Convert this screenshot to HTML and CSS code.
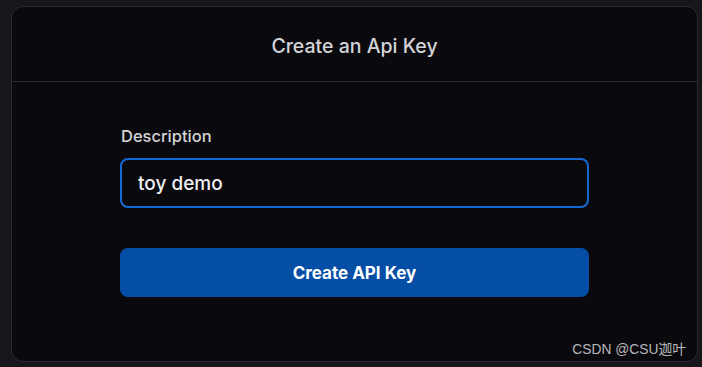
FILE: index.html
```html
<!DOCTYPE html>
<html lang="en">
<head>
    <meta charset="UTF-8">
    <meta name="viewport" content="width=device-width, initial-scale=1.0">
    <title>Create an Api Key</title>
    <link rel="stylesheet" href="styles.css">
</head>
<body>

<div class="modal">
    <div class="modal-header">
        <h2>Create an Api Key</h2>
    </div>

    <div class="modal-body">
        <label class="field-label" for="description">Description</label>
        <input type="text" id="description" class="field-input" value="toy demo">

        <button class="button">Create API Key</button>
    </div>

    <!-- marca d'água -->
    <div class="watermark">CSDN @CSU迦叶</div>
</div>

</body>
</html>
```

FILE: styles.css
```css
body {
    margin: 0;
    background-color: #17171b;
    font-family: Inter, "Noto Sans", Arial, sans-serif;
    color: #d4d4d8;
}
.modal {
    position: relative;
    box-sizing: border-box;
    margin: 6px 0 0 11px;
    width: 687px;
    height: 356px;
    background-color: #0a0a0e;
    border: 1px solid #2a2a30;
    border-radius: 12px;
}
.modal-header {
    box-sizing: border-box;
    height: 75px;
    padding-top: 3px;
    display: flex;
    align-items: center;
    justify-content: center;
    border-bottom: 1px solid #2a2a30;
}
.modal-header h2 {
    margin: 0;
    font-size: 19.5px;
    font-weight: 500;
    color: #d4d4d8;
}
.modal-body {
    padding: 44px 0 0 108px;
    width: 469px;
    display: flex;
    flex-direction: column;
}
.field-label {
    font-size: 16.5px;
    font-weight: 500;
    color: #d4d4d8;
    line-height: 20px;
    margin-left: 1px;
}
.field-input {
    margin-top: 12px;
    box-sizing: border-box;
    width: 469px;
    height: 50px;
    padding: 0 16px;
    background-color: #0a0a0e;
    border: 2px solid #1668d2;
    border-radius: 8px;
    color: #f0f0f2;
    font-family: inherit;
    font-size: 19px;
    font-weight: 500;
    outline: none;
}
.button {
    margin-top: 40px;
    width: 469px;
    height: 49px;
    background-color: #054ea6;
    color: #ffffff;
    border: none;
    border-radius: 8px;
    font-family: inherit;
    font-size: 17px;
    font-weight: 700;
    cursor: pointer;
}
.watermark {
    position: absolute;
    right: 11px;
    bottom: 3px;
    font-family: Arial, "Liberation Sans", "Noto Sans CJK SC", sans-serif;
    font-size: 13.8px;
    color: #b8b8bc;
}
```
